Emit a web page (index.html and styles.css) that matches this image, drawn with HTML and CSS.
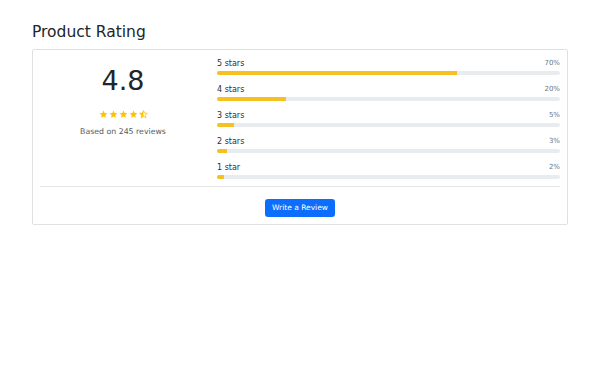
FILE: index.html
```html
<!DOCTYPE html>
<html>
<head>
  <meta charset="UTF-8">
  <title>Product Rating</title>
  <link rel="stylesheet" href="styles.css">
</head>
<body>
<div class="page">
  <h1>Product Rating</h1>
  <div class="card">
    <div class="rating-row">
      <div class="summary">
        <div class="score">4.8</div>
        <div class="stars">
          <svg viewBox="0 0 10 10"><path class="full" d="M5 .6l1.3 2.8 3 .3-2.3 2 .7 3-2.7-1.6-2.7 1.6.7-3-2.3-2 3-.3z"/></svg>
          <svg viewBox="0 0 10 10"><path class="full" d="M5 .6l1.3 2.8 3 .3-2.3 2 .7 3-2.7-1.6-2.7 1.6.7-3-2.3-2 3-.3z"/></svg>
          <svg viewBox="0 0 10 10"><path class="full" d="M5 .6l1.3 2.8 3 .3-2.3 2 .7 3-2.7-1.6-2.7 1.6.7-3-2.3-2 3-.3z"/></svg>
          <svg viewBox="0 0 10 10"><path class="full" d="M5 .6l1.3 2.8 3 .3-2.3 2 .7 3-2.7-1.6-2.7 1.6.7-3-2.3-2 3-.3z"/></svg>
          <svg viewBox="0 0 10 10"><path class="outline" d="M5 .6l1.3 2.8 3 .3-2.3 2 .7 3-2.7-1.6-2.7 1.6.7-3-2.3-2 3-.3z"/><path class="full" d="M5 .6v6.5l-2.7 1.6.7-3-2.3-2 3-.3z"/></svg>
        </div>
        <p class="based">Based on 245 reviews</p>
      </div>
      <div class="bars">
        <div class="bar-row">
          <div class="bar-head"><span>5 stars</span><small>70%</small></div>
          <div class="track"><div class="fill" style="width: 70%"></div></div>
        </div>
        <div class="bar-row">
          <div class="bar-head"><span>4 stars</span><small>20%</small></div>
          <div class="track"><div class="fill" style="width: 20%"></div></div>
        </div>
        <div class="bar-row">
          <div class="bar-head"><span>3 stars</span><small>5%</small></div>
          <div class="track"><div class="fill" style="width: 5%"></div></div>
        </div>
        <div class="bar-row">
          <div class="bar-head"><span>2 stars</span><small>3%</small></div>
          <div class="track"><div class="fill" style="width: 3%"></div></div>
        </div>
        <div class="bar-row">
          <div class="bar-head"><span>1 star</span><small>2%</small></div>
          <div class="track"><div class="fill" style="width: 2%"></div></div>
        </div>
      </div>
    </div>
    <hr>
    <div class="actions">
      <a class="btn" href="#">Write a Review</a>
    </div>
  </div>
</div>
</body>
</html>
```

FILE: styles.css
```css
* {
  margin: 0;
  padding: 0;
  box-sizing: border-box;
}

body {
  font-family: "DejaVu Sans", sans-serif;
  color: #212529;
  background: #fff;
}

.page {
  padding: 22px 32px;
}

h1 {
  font-size: 15.5px;
  font-weight: 400;
  line-height: 20px;
  margin-bottom: 7px;
}

.card {
  border: 1px solid #dfe1e3;
  border-radius: 2px;
  padding: 7px 7px 7px;
}

.rating-row {
  display: grid;
  grid-template-columns: 166px 1fr;
  gap: 11px;
}

.summary {
  text-align: center;
  padding-top: 9px;
}

.score {
  font-size: 27px;
  line-height: 30px;
}

.stars {
  display: flex;
  justify-content: center;
  gap: 1px;
  margin-top: 14px;
}

.stars svg {
  width: 9px;
  height: 9px;
}

.stars .full {
  fill: #ffc107;
}

.stars .outline {
  fill: none;
  stroke: #ffc107;
  stroke-width: .9;
}

.based {
  font-size: 7.8px;
  line-height: 10px;
  color: #555b61;
  margin-top: 8px;
}

.bar-row {
  margin-bottom: 8px;
}

.bar-row:last-child {
  margin-bottom: 0;
}

.bar-head {
  display: flex;
  justify-content: space-between;
  align-items: center;
  height: 12px;
  padding-top: 1px;
  font-size: 8px;
  line-height: 11px;
  margin-bottom: 2px;
  color: #2b2f33;
}

.bar-head small {
  font-size: 7px;
  line-height: 11px;
  color: #6c757d;
}

.track {
  height: 4px;
  background: #e9ecef;
  border-radius: 2px;
  overflow: hidden;
}

.fill {
  height: 100%;
  background: #f6c120;
}

hr {
  border: 0;
  border-top: 1px solid #e3e5e7;
  margin: 7px 0 12px;
}

.actions {
  display: flex;
  justify-content: center;
}

.btn {
  display: block;
  font-size: 7.5px;
  line-height: 10px;
  padding: 4px 7px;
  color: #fff;
  background: #0d6efd;
  border-radius: 3px;
  text-decoration: none;
}
```
